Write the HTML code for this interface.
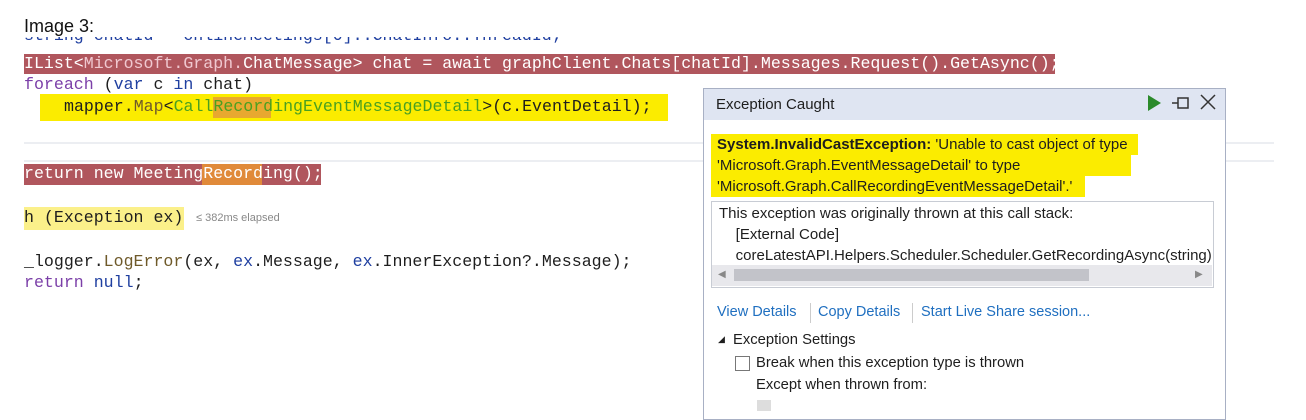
<!DOCTYPE html>
<html><head><meta charset="utf-8"><style>
body{margin:0;width:1306px;height:411px;background:#fff;overflow:hidden;position:relative;font-family:"Liberation Sans",sans-serif}
.a{position:absolute;white-space:pre}
.c{font-family:"Liberation Mono",monospace;font-size:16.6px;color:#1e1e1e;line-height:20px}
.kw{color:#7b3fa8}.bl{color:#1f3fa0}.fn{color:#6f5a2a}
.u{font-family:"Liberation Sans",sans-serif;font-size:14px;color:#1e1e1e}
</style></head><body>
<div class="a c" style="left:24px;top:37px;height:9px;overflow:hidden;color:#1f3fa0"><span style="position:relative;top:-11px">string chatId = onlineMeetings[0]..ChatInfo..ThreadId;</span></div>
<div class="a" style="left:24px;top:16px;font-size:18px;color:#111">Image 3:</div>
<div class="a" style="left:24px;top:54px;width:1031px;height:20px;background:#b0565d"></div>
<div class="a c" style="left:24px;top:54px;color:#fff">IList&lt;<span style="color:#f0c8d0">Microsoft.Graph.</span>ChatMessage&gt; chat = await graphClient.Chats[chatId].Messages.Request().GetAsync();</div>
<div class="a c" style="left:24px;top:75px"><span class="kw">foreach</span> (<span class="bl">var</span> c <span class="bl">in</span> chat)</div>
<div class="a" style="left:40px;top:94px;width:628px;height:27px;background:#fbec00"></div>
<div class="a" style="left:213px;top:97px;width:58px;height:21px;background:#e8a830"></div>
<div class="a c" style="left:64px;top:97px">mapper.<span class="fn">Map</span>&lt;<span style="color:#4aa020">CallRecordingEventMessageDetail</span>&gt;(c.EventDetail);</div>
<div class="a" style="left:24px;top:142px;width:1250px;height:2px;background:#eceef2"></div>
<div class="a" style="left:24px;top:160px;width:1250px;height:2px;background:#eceef2"></div>
<div class="a" style="left:24px;top:164px;width:297px;height:21px;background:#b0565d"></div>
<div class="a" style="left:202px;top:164px;width:60px;height:21px;background:#e08a3a"></div>
<div class="a c" style="left:24px;top:164px;color:#fff">return new MeetingRecording();</div>
<div class="a" style="left:24px;top:207px;width:160px;height:23px;background:#fbf08a"></div>
<div class="a c" style="left:24px;top:208px">h (Exception ex)</div>
<div class="a" style="left:196px;top:212px;font-size:11px;color:#888">≤ 382ms elapsed</div>
<div class="a c" style="left:24px;top:252px">_logger.<span class="fn">LogError</span>(ex, <span class="bl">ex</span>.Message, <span class="bl">ex</span>.InnerException?.Message);</div>
<div class="a c" style="left:24px;top:273px"><span class="kw">return</span> <span class="bl">null</span>;</div>

<div class="a" style="left:703px;top:88px;width:521px;height:330px;border:1px solid #a8b0c4;background:#fff"></div>
<div class="a" style="left:704px;top:89px;width:521px;height:31px;background:#dfe5f2"></div>
<div class="a u" style="left:716px;top:96px;font-size:15px">Exception Caught</div>
<svg class="a" style="left:1144px;top:92px" width="80" height="24"><path d="M4 3 L17 11 L4 19Z" fill="#2b8a2b"/><path d="M28 11h6M34 6h10v10h-10z" stroke="#333" fill="none" stroke-width="1.5"/><path d="M57 3l14 14M71 3l-14 14" stroke="#333" stroke-width="1.5"/></svg>
<div class="a" style="left:711px;top:134px;width:427px;height:21px;background:#fbec00"></div>
<div class="a" style="left:711px;top:155px;width:420px;height:21px;background:#fbec00"></div>
<div class="a" style="left:711px;top:176px;width:374px;height:21px;background:#fbec00"></div>
<div class="a u" style="left:717px;top:134px;line-height:21px;font-size:15px"><b>System.InvalidCastException:</b> 'Unable to cast object of type
'Microsoft.Graph.EventMessageDetail' to type
'Microsoft.Graph.CallRecordingEventMessageDetail'.'</div>
<div class="a" style="left:711px;top:201px;width:501px;height:85px;border:1px solid #c8ccd4;background:#fff"></div>
<div class="a" style="left:712px;top:202px;width:500px;height:63px;overflow:hidden"><div class="a u" style="left:7px;top:1px;line-height:21px;font-size:15px">This exception was originally thrown at this call stack:
    [External Code]
    coreLatestAPI.Helpers.Scheduler.Scheduler.GetRecordingAsync(string)</div></div>
<div class="a" style="left:712px;top:265px;width:500px;height:21px;background:#e8e8ec"></div>
<div class="a" style="left:734px;top:269px;width:355px;height:12px;background:#c2c3c9"></div>
<div class="a" style="left:718px;top:269px;font-size:10px;color:#888">◀</div>
<div class="a" style="left:1195px;top:269px;font-size:10px;color:#888">▶</div>
<div class="a u" style="left:717px;top:304px;color:#1f6fc0;font-size:14.5px">View Details</div>
<div class="a" style="left:810px;top:303px;width:1px;height:20px;background:#ccc"></div>
<div class="a u" style="left:818px;top:304px;color:#1f6fc0;font-size:14.5px">Copy Details</div>
<div class="a" style="left:912px;top:303px;width:1px;height:20px;background:#ccc"></div>
<div class="a u" style="left:921px;top:304px;color:#1f6fc0;font-size:14.5px">Start Live Share session...</div>
<div class="a u" style="left:718px;top:334px;font-size:9px">◢</div>
<div class="a u" style="left:733px;top:332px;font-size:14.8px">Exception Settings</div>
<div class="a" style="left:735px;top:356px;width:13px;height:13px;border:1px solid #777"></div>
<div class="a u" style="left:756px;top:355px;font-size:14.8px">Break when this exception type is thrown</div>
<div class="a u" style="left:756px;top:377px;font-size:14.8px">Except when thrown from:</div>
<div class="a" style="left:757px;top:400px;width:14px;height:11px;background:#ddd"></div>
</body></html>
